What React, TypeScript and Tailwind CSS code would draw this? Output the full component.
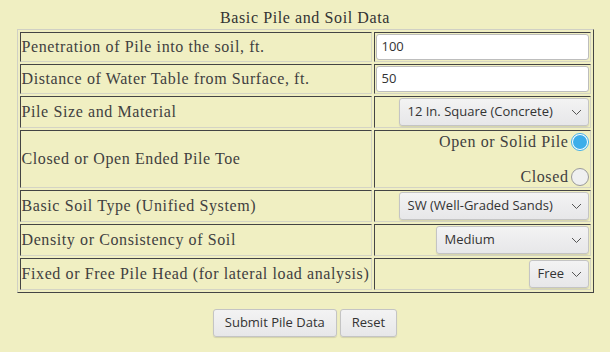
import React from 'react';

const labelFont = { fontFamily: '"Liberation Serif", "DejaVu Serif", serif' };
const uiFont = { fontFamily: '"Open Sans", "Noto Sans", sans-serif' };

function Chevron() {
  return (
    <svg width="11" height="7" viewBox="0 0 11 7" className="shrink-0">
      <path d="M1 1 L5.5 5.5 L10 1" fill="none" stroke="#555" strokeWidth="1" />
    </svg>
  );
}

function FakeSelect({ value, width }: { value: string; width: string }) {
  return (
    <div
      className={`${width} ml-auto h-[28px] flex items-center justify-between pl-[8px] pr-[6px] rounded-[3px] border border-[#c4c4c4] bg-gradient-to-b from-[#f3f3f3] to-[#e7e7e9] shadow-[0_1px_1px_rgba(0,0,0,0.12)] text-[13px] text-[#333] tracking-normal`}
      style={uiFont}
    >
      <span>{value}</span>
      <Chevron />
    </div>
  );
}

function Radio({ checked }: { checked: boolean }) {
  return checked ? (
    <span className="inline-flex w-[18px] h-[18px] rounded-full border border-[#3daee9] bg-white items-center justify-center shrink-0">
      <span className="w-[14px] h-[14px] rounded-full bg-[#3daee9]" />
    </span>
  ) : (
    <span className="inline-block w-[18px] h-[18px] rounded-full border border-[#9a9a9a] bg-[#eff0f1] shrink-0" />
  );
}

const labelCell =
  'border border-t-[#444] border-l-[#444] border-r-[#d4d4c4] border-b-[#d4d4c4] p-[1px] w-[352px] whitespace-nowrap text-[16px] tracking-[0.6px] text-[#404040] align-middle';
const valueCell =
  'border border-t-[#444] border-l-[#444] border-r-[#d4d4c4] border-b-[#d4d4c4] p-[1px] align-middle';

function TextBox({ value }: { value: string }) {
  return (
    <div
      className="h-[26px] w-full flex items-center px-[5px] bg-white border border-[#bdbdbd] rounded-[3px] text-[13px] text-[#333]"
      style={uiFont}
    >
      {value}
    </div>
  );
}

export default function App() {
  return (
    <div className="w-[610px] h-[352px] bg-[#f0efc2] pt-[8px]">
      <table className="mx-auto border-separate border-spacing-[2px] border border-t-[#d0d0c4] border-l-[#d0d0c4] border-r-[#444] border-b-[#444]">
        <caption className="text-[16px] tracking-[0.6px] text-[#333] leading-[20px] pb-[1px]" style={labelFont}>
          Basic Pile and Soil Data
        </caption>
        <tbody style={labelFont}>
          <tr className="h-[30px]">
            <td className={labelCell}>Penetration of Pile into the soil, ft.</td>
            <td className={`${valueCell} w-[217px]`}>
              <TextBox value="100" />
            </td>
          </tr>
          <tr className="h-[30px]">
            <td className={labelCell}>Distance of Water Table from Surface, ft.</td>
            <td className={valueCell}>
              <TextBox value="50" />
            </td>
          </tr>
          <tr className="h-[32px]">
            <td className={labelCell}>Pile Size and Material</td>
            <td className={valueCell}>
              <FakeSelect value="12 In. Square (Concrete)" width="w-[190px]" />
            </td>
          </tr>
          <tr className="h-[58px]">
            <td className={labelCell}>Closed or Open Ended Pile Toe</td>
            <td className={valueCell}>
              <div className="flex flex-col items-end gap-[17px] text-[16px] tracking-[0.6px] text-[#404040]">
                <div className="flex items-center gap-[2px] leading-[18px]">
                  Open or Solid Pile <Radio checked />
                </div>
                <div className="flex items-center gap-[2px] leading-[18px]">
                  Closed <Radio checked={false} />
                </div>
              </div>
            </td>
          </tr>
          <tr className="h-[32px]">
            <td className={labelCell}>Basic Soil Type (Unified System)</td>
            <td className={valueCell}>
              <FakeSelect value="SW (Well-Graded Sands)" width="w-[190px]" />
            </td>
          </tr>
          <tr className="h-[32px]">
            <td className={labelCell}>Density or Consistency of Soil</td>
            <td className={valueCell}>
              <FakeSelect value="Medium" width="w-[153px]" />
            </td>
          </tr>
          <tr className="h-[32px]">
            <td className={labelCell}>Fixed or Free Pile Head (for lateral load analysis)</td>
            <td className={valueCell}>
              <FakeSelect value="Free" width="w-[60px]" />
            </td>
          </tr>
        </tbody>
      </table>
      <div className="flex justify-center gap-[3px] mt-[16px] text-[13px] text-[#333]" style={uiFont}>
        <button className="h-[28px] px-[11px] rounded-[3px] border border-[#c4c4c4] bg-gradient-to-b from-[#f3f3f3] to-[#e7e7e9] shadow-[0_1px_1px_rgba(0,0,0,0.12)]">
          Submit Pile Data
        </button>
        <button className="h-[28px] px-[11px] rounded-[3px] border border-[#c4c4c4] bg-gradient-to-b from-[#f3f3f3] to-[#e7e7e9] shadow-[0_1px_1px_rgba(0,0,0,0.12)]">
          Reset
        </button>
      </div>
    </div>
  );
}
